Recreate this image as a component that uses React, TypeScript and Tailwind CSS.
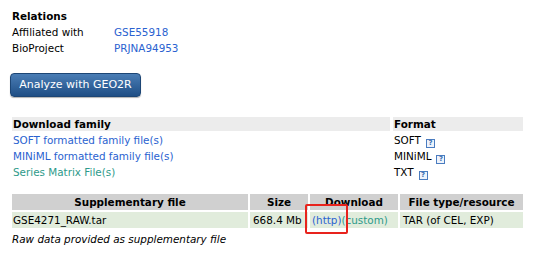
import React from "react";

const Help = () => (
  <span className="inline-flex items-center justify-center w-[9px] h-[9px] border border-[#4a7cc0] bg-[#eef3fb] text-[#3a6fb0] text-[7px] leading-none font-bold ml-[5px] align-[-1px]">?</span>
);

export default function App() {
  return (
    <div className="w-[554px] h-[257px] bg-white text-[10.4px] text-black relative" style={{ fontFamily: '"DejaVu Sans", Verdana, sans-serif' }}>
      <div className="pl-[12px] pt-[9px]">
        <div className="font-bold leading-[15px]">Relations</div>
        <div className="flex leading-[15px] mt-[1px]">
          <span className="w-[102px]">Affiliated with</span>
          <span className="text-[#2a62d0]">GSE55918</span>
        </div>
        <div className="flex leading-[16px]">
          <span className="w-[102px]">BioProject</span>
          <span className="text-[#2a62d0]">PRJNA94953</span>
        </div>
      </div>
      <div className="pl-[10px] mt-[17px]">
        <div className="w-[131px] h-[24px] rounded-[4px] border border-[#1d4675] bg-gradient-to-b from-[#4a7db5] to-[#1f4f86] text-white text-[11px] flex items-center justify-center shadow-[0_1px_1px_rgba(0,0,0,0.3)]">
          Analyze with GEO2R
        </div>
      </div>
      <div className="pl-[12px] mt-[20px] w-[523px]">
        <div className="flex">
          <div className="w-[378px] bg-[#ececec] font-bold leading-[14px] pl-[1px]">Download family</div>
          <div className="w-[3px]" />
          <div className="flex-1 bg-[#ececec] font-bold leading-[14px] pl-[1px]">Format</div>
        </div>
        <div className="mt-[1px]">
          {[
            ["SOFT formatted family file(s)", "SOFT", "text-[#2a62d0]"],
            ["MINiML formatted family file(s)", "MINiML", "text-[#2a62d0]"],
            ["Series Matrix File(s)", "TXT", "text-[#2e9a8a]"],
          ].map(([a, b, c]) => (
            <div key={a} className="flex leading-[16px]">
              <div className={`w-[378px] pl-[1px] ${c}`}>{a}</div>
              <div className="w-[3px]" />
              <div className="flex-1 pl-[1px]">
                {b}
                <Help />
              </div>
            </div>
          ))}
        </div>
      </div>
      <div className="pl-[12px] mt-[14px]">
        <div className="grid grid-cols-[236px_58px_88px_123px] gap-[2px] w-[511px]">
          <div className="bg-[#d0d0d0] font-bold text-center leading-[16px]">Supplementary file</div>
          <div className="bg-[#d0d0d0] font-bold text-center leading-[16px]">Size</div>
          <div className="bg-[#d0d0d0] font-bold text-center leading-[16px]">Download</div>
          <div className="bg-[#d0d0d0] font-bold text-center leading-[16px]">File type/resource</div>
          <div className="bg-[#e1ecdc] leading-[16px] pl-[1px]">GSE4271_RAW.tar</div>
          <div className="bg-[#e1ecdc] leading-[16px] pl-[3px]">668.4 Mb</div>
          <div className="bg-[#e1ecdc] leading-[16px] pl-[2px] whitespace-nowrap">
            <span className="text-[#2a62d0]">(http)</span>
            <span className="text-[#2e9a8a]">(custom)</span>
          </div>
          <div className="bg-[#e1ecdc] leading-[16px] pl-[3px]">TAR (of CEL, EXP)</div>
        </div>
        <div className="italic leading-[16px] mt-[3px]">Raw data provided as supplementary file</div>
      </div>
      <div className="absolute left-[305px] top-[204px] w-[43px] h-[30px] border-2 border-[#e8231d] rounded-[2px]" />
    </div>
  );
}
